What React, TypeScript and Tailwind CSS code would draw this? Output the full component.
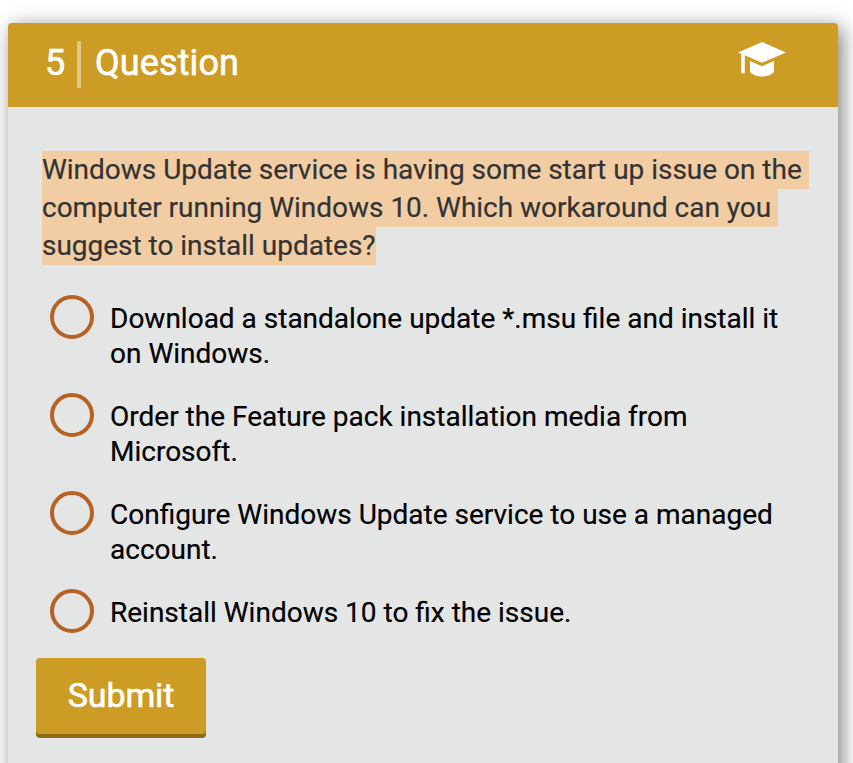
const answers = [
  ["Download a standalone update *.msu file and install it", "on Windows."],
  ["Order the Feature pack installation media from", "Microsoft."],
  ["Configure Windows Update service to use a managed", "account."],
  ["Reinstall Windows 10 to fix the issue."],
];

const question = [
  "Windows Update service is having some start up issue on the ",
  "computer running Windows 10. Which workaround can you ",
  "suggest to install updates?",
];

function GraduationCap() {
  return (
    <svg className="h-[35px] w-12" viewBox="0 0 48 35" fill="white" aria-hidden="true">
      <path d="M24 0 48 10.5 24 20.7 6.8 13.3V31.3H3.2V11.8L0 10.5Z" />
      <path d="M12 19 24 24.3 36 19V30Q31.5 34.6 24 34.6T12 30Z" />
    </svg>
  );
}

export default function App() {
  return (
    <div className="h-[763px] w-full overflow-hidden bg-white pl-2 pr-[15px] pt-[23px] font-['Roboto',sans-serif]">
      <main className="h-[800px] rounded-[4px] bg-[#e4e6e5] shadow-[4px_4px_20px_rgba(0,0,0,0.5)]">
        <header className="flex h-[84px] items-center justify-between rounded-t-[4px] bg-[#cc9c24] pl-[37px] pr-[52px] text-white">
          <div className="-mt-0.5 flex items-center text-4xl leading-[46px] [-webkit-text-stroke:0.6px_white]">
            <span className="-mt-0.5 w-8">5</span>
            <span className="h-[47px] w-1 bg-[#e5c785]" />
            <h1 className="-mt-0.5 ml-[14px] tracking-[0.1px]">Question</h1>
          </div>
          <div className="-mt-3"><GraduationCap /></div>
        </header>
        <section className="px-7 pt-11">
          <p className="ml-1.5 text-[28px] leading-[38px] tracking-[-0.02px] text-[#333] [-webkit-text-stroke:0.2px_#333]">
            {question.map((line) => (
              <span key={line} className="block w-fit whitespace-pre bg-[#f2cda4]">{line}</span>
            ))}
          </p>
          <div className="mt-[30px] flex flex-col gap-[22px] pl-3.5">
            {answers.map((lines) => (
              <label key={lines[0]} className="flex items-start">
                <input type="radio" name="answer" className="size-11 shrink-0 appearance-none rounded-full border-4 border-[#b66224]" />
                <span className="ml-4 mt-1.5 text-[28px] leading-[35px] text-black [-webkit-text-stroke:0.2px_black]">
                  {lines.map((line) => (
                    <span key={line} className="block whitespace-nowrap">{line}</span>
                  ))}
                </span>
              </label>
            ))}
          </div>
          <button className="mt-[25px] block h-[76px] w-[170px] rounded-[4px] bg-[#cc9c24] pb-0.5 text-[34px] tracking-[-0.1px] text-white shadow-[0_4px_0_#916b15] [-webkit-text-stroke:0.6px_white]">Submit</button>
        </section>
      </main>
    </div>
  );
}
